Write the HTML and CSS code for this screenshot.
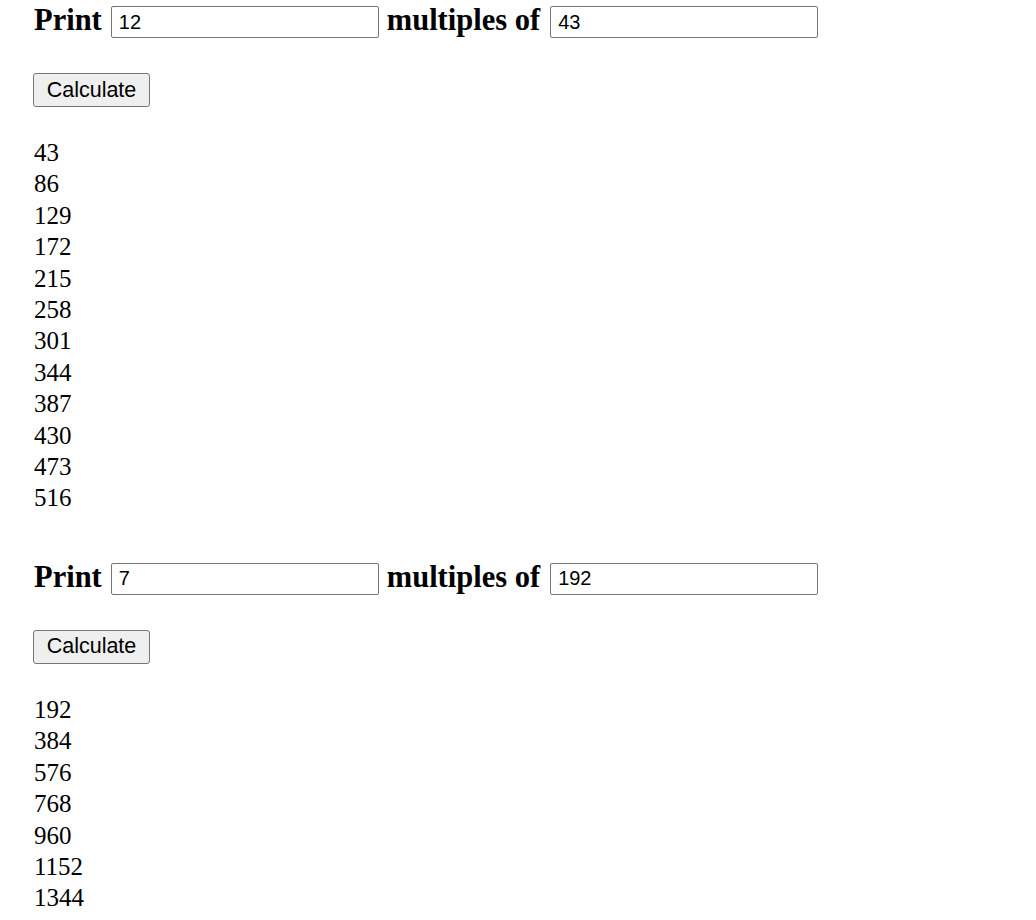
FILE: index.html
```html
<!DOCTYPE html>
<html>
<head>
<meta charset="utf-8">
<link rel="stylesheet" href="styles.css">
</head>
<body>
<section class="block">
  <div class="row">
    <span class="label">Print</span>
    <input class="field field-a" type="text" value="12">
    <span class="label label-b">multiples of</span>
    <input class="field field-b" type="text" value="43">
  </div>
  <div class="actions"><button class="btn">Calculate</button></div>
  <div class="results">
    <div>43</div><div>86</div><div>129</div><div>172</div><div>215</div><div>258</div>
    <div>301</div><div>344</div><div>387</div><div>430</div><div>473</div><div>516</div>
  </div>
</section>
<section class="block">
  <div class="row">
    <span class="label">Print</span>
    <input class="field field-a" type="text" value="7">
    <span class="label label-b">multiples of</span>
    <input class="field field-b" type="text" value="192">
  </div>
  <div class="actions"><button class="btn">Calculate</button></div>
  <div class="results">
    <div>192</div><div>384</div><div>576</div><div>768</div><div>960</div><div>1152</div><div>1344</div>
  </div>
</section>
</body>
</html>
```

FILE: styles.css
```css
html, body {
  margin: 0;
  background: #ffffff;
}
body {
  padding: 6px 0 0 34px;
  font-family: "Liberation Serif", "Times New Roman", serif;
  color: #000;
}
.block + .block {
  margin-top: 49px;
}
.row {
  display: flex;
  align-items: center;
  height: 32px;
}
.label {
  font-weight: bold;
  font-size: 30.5px;
  line-height: 32px;
  margin-top: -4px;
}
.field {
  box-sizing: border-box;
  width: 268px;
  height: 32px;
  border: 1px solid #767676;
  border-radius: 2px;
  padding: 0 7px;
  font-family: "Liberation Sans", Arial, sans-serif;
  font-size: 20px;
  color: #000;
  background: #fff;
  outline: none;
}
.field-a {
  margin-left: 9px;
}
.label-b {
  margin-left: 8px;
}
.field-b {
  margin-left: 10px;
}
.actions {
  margin-top: 35px;
  height: 34px;
}
.btn {
  box-sizing: border-box;
  width: 117px;
  height: 34px;
  margin-left: -1px;
  padding: 0;
  border: 1px solid #767676;
  border-radius: 3px;
  background: #efefef;
  font-family: "Liberation Sans", Arial, sans-serif;
  font-size: 21.5px;
  color: #000;
}
.results {
  margin-top: 30px;
  font-size: 25px;
  line-height: 31.4px;
}
```
